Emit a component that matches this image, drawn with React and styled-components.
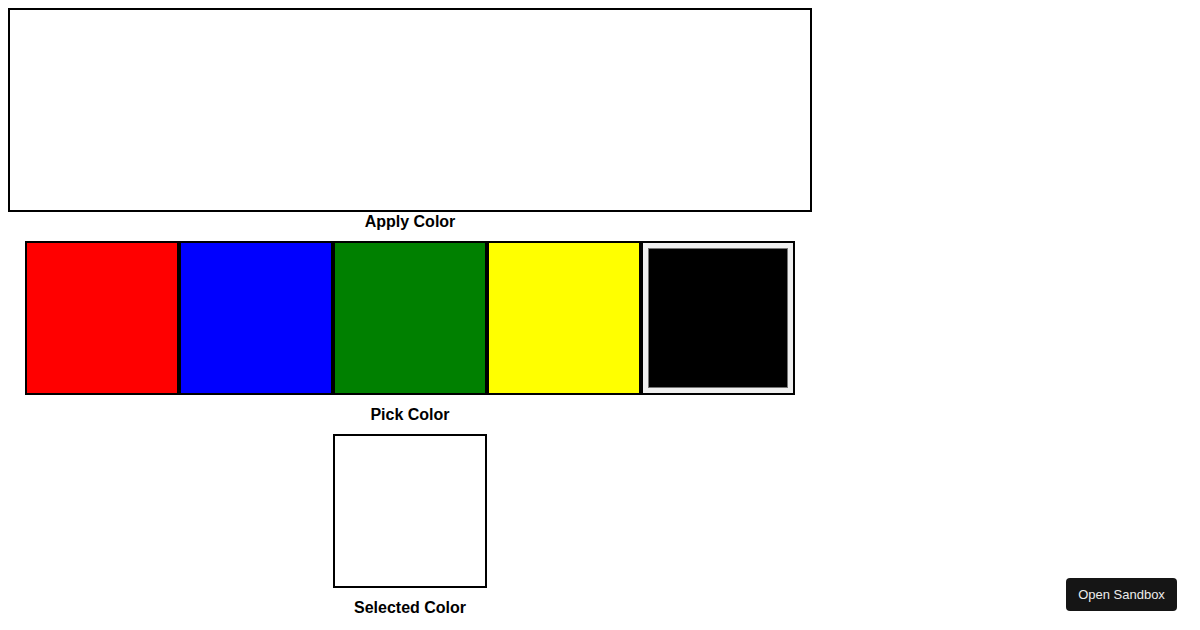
import React, { useState } from "react";
import styled, { createGlobalStyle } from "styled-components";

const Global = createGlobalStyle`
  body {
    margin: 8px;
    background: #fff;
    font-family: "Liberation Sans", Arial, sans-serif;
  }
`;

const Page = styled.div`
  width: 804px;
  display: flex;
  flex-direction: column;
  align-items: center;
`;

const Canvas = styled.div`
  box-sizing: border-box;
  width: 804px;
  height: 204px;
  border: 2px solid #000;
  background: ${(p) => p.$color};
`;

const Label = styled.div`
  font-size: 16px;
  font-weight: bold;
  line-height: 18px;
  padding-top: 1px;
  color: #000;
  text-align: center;
`;

const Row = styled.div`
  display: flex;
  margin: 10px 0 10px;
`;

const Swatch = styled.div`
  box-sizing: border-box;
  width: 154px;
  height: 154px;
  border: 2px solid #000;
  background: ${(p) => p.$color};
  cursor: pointer;
  box-shadow: ${(p) =>
    p.$selected ? "inset 0 0 0 5px #efefef, inset 0 0 0 6px #767676" : "none"};
`;

const Selected = styled.div`
  box-sizing: border-box;
  width: 154px;
  height: 154px;
  border: 2px solid #000;
  background: ${(p) => p.$color};
  margin: 10px 0 10px;
`;

const SandboxButton = styled.button`
  position: fixed;
  right: 23px;
  bottom: 19px;
  width: 111px;
  height: 33px;
  border: none;
  border-radius: 4px;
  background: #151515;
  color: #ececec;
  font-family: "Liberation Sans", Arial, sans-serif;
  font-size: 13px;
  padding: 0;
  cursor: pointer;
`;

const colors = ["red", "blue", "green", "yellow", "black"];

export default function App() {
  const [picked, setPicked] = useState("black");
  const [applied, setApplied] = useState("white");
  return (
    <>
      <Global />
      <Page>
        <Canvas $color={applied} onClick={() => setApplied(picked)} />
        <Label>Apply Color</Label>
        <Row>
          {colors.map((c) => (
            <Swatch
              key={c}
              $color={c}
              $selected={c === picked}
              onClick={() => setPicked(c)}
            />
          ))}
        </Row>
        <Label>Pick Color</Label>
        <Selected $color="white" />
        <Label>Selected Color</Label>
      </Page>
      <SandboxButton>Open Sandbox</SandboxButton>
    </>
  );
}
